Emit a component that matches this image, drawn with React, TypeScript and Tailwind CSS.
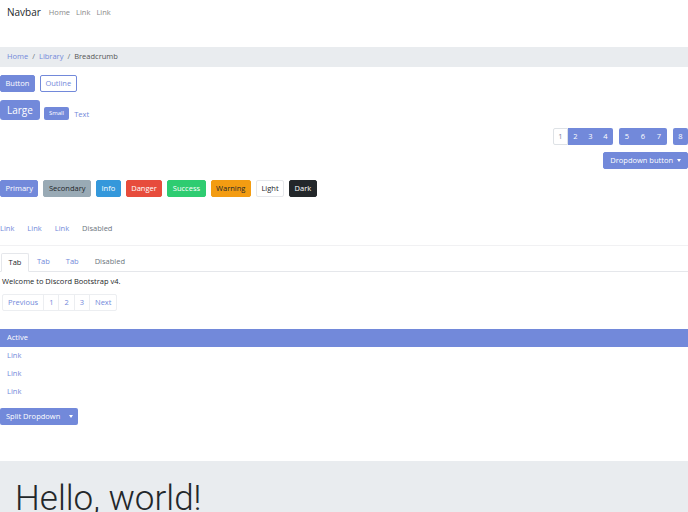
const blue = "text-[#7289da]";

function Btn({
  children,
  className = "",
}: {
  children: React.ReactNode;
  className?: string;
}) {
  return (
    <span
      className={`inline-flex h-[17px] items-center rounded-[2px] border px-[4.5px] text-[7.5px] leading-none ${className}`}
    >
      {children}
    </span>
  );
}

function Caret() {
  return (
    <span className="ml-[4px] inline-block h-0 w-0 border-x-[2.5px] border-t-[3px] border-x-transparent border-t-white" />
  );
}

const colours = [
  { label: "Primary", cls: "bg-[#7289da] border-[#7289da] text-white" },
  { label: "Secondary", cls: "bg-[#99aab5] border-[#99aab5] text-[#23272a]" },
  { label: "Info", cls: "bg-[#3498db] border-[#3498db] text-white" },
  { label: "Danger", cls: "bg-[#e74c3c] border-[#e74c3c] text-white" },
  { label: "Success", cls: "bg-[#2ecc71] border-[#2ecc71] text-white" },
  { label: "Warning", cls: "bg-[#f39c12] border-[#f39c12] text-[#23272a]" },
  { label: "Light", cls: "bg-white border-[#e5e7eb] text-[#23272a]" },
  { label: "Dark", cls: "bg-[#23272a] border-[#23272a] text-white" },
];

export default function App() {
  return (
    <div
      className="min-h-[512px] bg-white text-[7.5px] text-[#23272a]"
      style={{ fontFamily: "'Open Sans', sans-serif" }}
    >
      {/* navbar */}
      <div className="flex h-[47px] items-start gap-[8px] px-[7px] pt-[4px]">
        <span className="text-[10px] leading-[17px] text-[#23272a]">Navbar</span>
        <div className="flex gap-[6px] leading-[17px] text-[#888]">
          <span>Home</span>
          <span>Link</span>
          <span>Link</span>
        </div>
      </div>

      {/* breadcrumb */}
      <div className="flex h-[20px] items-center gap-[4px] bg-[#e9ecef] px-[7px]">
        <span className={blue}>Home</span>
        <span className="text-[#6c757d]">/</span>
        <span className={blue}>Library</span>
        <span className="text-[#6c757d]">/</span>
        <span className="text-[#555]">Breadcrumb</span>
      </div>

      {/* buttons */}
      <div className="mt-[8px] flex gap-[5px]">
        <Btn className="border-[#7289da] bg-[#7289da] text-white">Button</Btn>
        <Btn className="border-[#7289da] bg-white text-[#7289da]">Outline</Btn>
      </div>
      <div className="mt-[8px] flex items-end gap-[4px]">
        <span className="inline-flex h-[20px] items-center rounded-[3px] bg-[#7289da] px-[7px] text-[10px] text-white">
          Large
        </span>
        <span className="inline-flex h-[13px] items-center rounded-[2px] bg-[#7289da] px-[5px] text-[6px] text-white">
          Small
        </span>
        <span className={`${blue} ml-[1px] leading-[12px]`}>Text</span>
      </div>

      {/* button toolbar */}
      <div className="mt-[8px] flex justify-end gap-[6px]">
        <div className="flex">
          <span className="flex h-[17px] w-[15px] items-center justify-center rounded-l-[2px] border border-[#dee2e6] bg-white text-[#7a85a8]">
            1
          </span>
          {["2", "3", "4"].map((n, i) => (
            <span
              key={n}
              className={`flex h-[17px] w-[15px] items-center justify-center bg-[#7289da] text-white ${i === 2 ? "rounded-r-[2px]" : ""}`}
            >
              {n}
            </span>
          ))}
        </div>
        <div className="flex overflow-hidden rounded-[2px]">
          {["5", "6", "7"].map((n) => (
            <span
              key={n}
              className="flex h-[17px] w-[16px] items-center justify-center bg-[#7289da] text-white"
            >
              {n}
            </span>
          ))}
        </div>
        <span className="flex h-[17px] w-[15px] items-center justify-center rounded-[2px] bg-[#7289da] text-white">
          8
        </span>
      </div>
      <div className="mt-[7px] flex justify-end">
        <Btn className="border-[#7289da] bg-[#7289da] px-[6px] text-white">
          Dropdown button
          <Caret />
        </Btn>
      </div>

      {/* colour buttons */}
      <div className="mt-[11px] flex gap-[5px]">
        {colours.map((c) => (
          <Btn key={c.label} className={c.cls}>
            {c.label}
          </Btn>
        ))}
      </div>

      {/* nav */}
      <div className="mt-[24px] flex h-[16px] items-center gap-[13px]">
        <span className={blue}>Link</span>
        <span className={blue}>Link</span>
        <span className={blue}>Link</span>
        <span className="text-[#6c757d]">Disabled</span>
      </div>
      <div className="mt-[8px] border-t border-[#f1f1f3]" />

      {/* tabs */}
      <div className="mt-[8px] flex h-[18px] items-end border-b border-[#e5e7eb]">
        <span className="-mb-px ml-[1px] flex h-[19px] items-center rounded-t-[2px] border border-[#e5e7eb] border-b-white bg-white px-[6.5px]">
          Tab
        </span>
        <span className={`flex h-[18px] items-center px-[8px] ${blue}`}>Tab</span>
        <span className={`flex h-[18px] items-center px-[8px] ${blue}`}>Tab</span>
        <span className="flex h-[18px] items-center px-[8px] text-[#6c757d]">
          Disabled
        </span>
      </div>
      <div className="flex h-[19px] items-center px-[2px]">
        Welcome to Discord Bootstrap v4.
      </div>

      {/* pagination */}
      <div className="mt-[3px] ml-[2px] flex">
        {["Previous", "1", "2", "3", "Next"].map((p, i, a) => (
          <span
            key={p}
            className={`-ml-px flex h-[17px] items-center border border-[#eceef1] px-[5px] ${blue} ${i === 0 ? "ml-0 rounded-l-[2px]" : ""} ${i === a.length - 1 ? "rounded-r-[2px]" : ""}`}
          >
            {p}
          </span>
        ))}
      </div>

      {/* list group */}
      <div className="mt-[18px]">
        <div className="flex h-[18px] items-center bg-[#7289da] px-[7px] text-white">
          Active
        </div>
        {["a", "b", "c"].map((k) => (
          <div key={k} className={`flex h-[18px] items-center px-[7px] ${blue}`}>
            Link
          </div>
        ))}
      </div>

      {/* split dropdown */}
      <div className="mt-[7px] flex">
        <div className="flex h-[17px] overflow-hidden rounded-[2px] bg-[#7289da] text-white">
          <span className="flex items-center pl-[6px] pr-[4px]">Split Dropdown</span>
          <span className="flex items-center pr-[5px] pl-[1px]">
            <Caret />
          </span>
        </div>
      </div>

      {/* jumbotron */}
      <div className="mt-[36px] h-[60px] bg-[#e9ecef] px-[15px] pt-[17px]">
        <h1
          className="text-[35px] leading-[42px] font-light text-[#23272a]"
          style={{ fontFamily: "Roboto, sans-serif" }}
        >
          Hello, world!
        </h1>
      </div>
    </div>
  );
}
